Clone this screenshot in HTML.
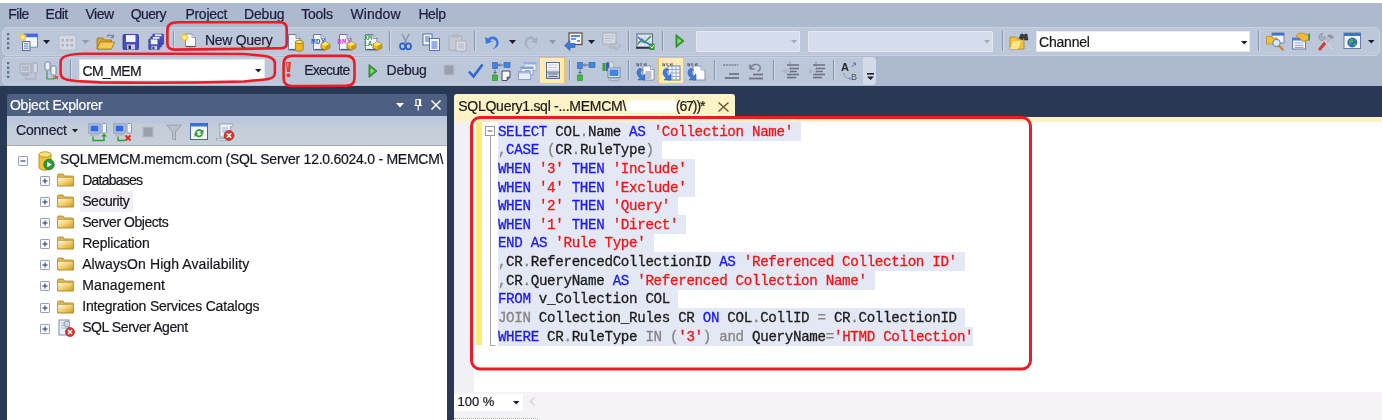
<!DOCTYPE html>
<html><head><meta charset="utf-8"><title>SSMS</title>
<style>
*{box-sizing:border-box;margin:0;padding:0}
html,body{width:1382px;height:420px;overflow:hidden;background:#fff}
body{position:relative;font-family:"Liberation Sans",sans-serif;font-size:14px;line-height:16px;color:#1e1e32}
.a{position:absolute}
.t{position:absolute;white-space:pre;line-height:16px;height:16px;-webkit-text-stroke:0.2px}
.c{position:absolute;white-space:pre;font-family:"Liberation Mono",monospace;font-size:14.2px;letter-spacing:-0.32px;line-height:18.64px;height:18.64px;color:#1c1c1c;-webkit-text-stroke:0.3px}
.k{color:#1a1af5}.r{color:#f21414}.g{color:#858585}
.sel{position:absolute;background:#e4e7f4;height:18.9px}
.sep{position:absolute;width:1px;background:#8592a8;box-shadow:1px 0 0 #d3dbe9}
svg{position:absolute;overflow:visible}
#w{position:absolute;left:0;top:0;width:1382px;height:420px;filter:blur(0.45px)}
</style></head><body>
<div id="w">
<div class="a" style="left:0px;top:3px;width:1382px;height:84px;background:#adb9ce;"></div>
<div class="a" style="left:0px;top:86px;width:1382px;height:334px;background:#293955;"></div>
<div class="a" style="left:2px;top:27px;width:1378px;height:28.5px;background:#bcc7d9;border-radius:5px;border:1px solid #c7d1e2"></div>
<div class="a" style="left:2px;top:56.5px;width:861px;height:28.5px;background:#bcc7d9;border-radius:5px 0 0 5px;border:1px solid #c7d1e2;border-right:none"></div>
<div class="a" style="left:863px;top:56.5px;width:13px;height:28.5px;background:#d3dbe9;border-radius:0 4px 4px 0"></div>
<span class="t" style="left:8.3px;top:5.9px;font-size:14px;letter-spacing:-0.520px;color:#1c1c38;">File</span>
<span class="t" style="left:45.6px;top:5.9px;font-size:14px;letter-spacing:-0.508px;color:#1c1c38;">Edit</span>
<span class="t" style="left:85.5px;top:5.9px;font-size:14px;letter-spacing:-0.464px;color:#1c1c38;">View</span>
<span class="t" style="left:130.8px;top:5.9px;font-size:14px;letter-spacing:-0.631px;color:#1c1c38;">Query</span>
<span class="t" style="left:185.4px;top:5.9px;font-size:14px;letter-spacing:-0.262px;color:#1c1c38;">Project</span>
<span class="t" style="left:244.0px;top:5.9px;font-size:14px;letter-spacing:-0.164px;color:#1c1c38;">Debug</span>
<span class="t" style="left:301.3px;top:5.9px;font-size:14px;letter-spacing:-0.271px;color:#1c1c38;">Tools</span>
<span class="t" style="left:350.5px;top:5.9px;font-size:14px;letter-spacing:0.041px;color:#1c1c38;">Window</span>
<span class="t" style="left:418.4px;top:5.9px;font-size:14px;letter-spacing:-0.398px;color:#1c1c38;">Help</span>
<span class="t" style="left:205.0px;top:32.4px;font-size:14px;letter-spacing:-0.290px;color:#1c1c38;">New Query</span>
<div class="a" style="left:79px;top:59px;width:185.5px;height:21.5px;background:#fff;border:1px solid #e4e9f2"></div>
<span class="t" style="left:82.5px;top:62.7px;font-size:14px;letter-spacing:-0.605px;color:#15151f;">CM_MEM</span>
<span class="t" style="left:304.2px;top:62.4px;font-size:14px;letter-spacing:-0.765px;color:#1c1c38;">Execute</span>
<span class="t" style="left:386.6px;top:62.4px;font-size:14px;letter-spacing:-0.239px;color:#1c1c38;">Debug</span>
<div class="a" style="left:696px;top:30.5px;width:104px;height:21.5px;background:#d5dcec;border:1px solid #e2e7f1;border-radius:1px"></div>
<div class="a" style="left:808px;top:30.5px;width:185px;height:21.5px;background:#d5dcec;border:1px solid #e2e7f1;border-radius:1px"></div>
<div class="a" style="left:1036px;top:31px;width:214px;height:21px;background:#fff;border:1px solid #e4e9f2"></div>
<span class="t" style="left:1039.0px;top:33.9px;font-size:14px;letter-spacing:-0.209px;color:#15151f;">Channel</span>
<div class="a" style="left:7px;top:116px;width:440px;height:304px;background:#fff;"></div>
<div class="a" style="left:7px;top:94px;width:440px;height:22px;background:#4d6082;border-radius:3px 3px 0 0"></div>
<span class="t" style="left:10.0px;top:96.7px;font-size:14px;letter-spacing:-0.270px;color:#fff;">Object Explorer</span>
<div class="a" style="left:7px;top:116px;width:440px;height:30px;background:linear-gradient(#bcc6dc 0,#bcc6dc 22%,#c2cdd9 30%,#c6d1da 100%);border-bottom:1px solid #a0abb7"></div>
<span class="t" style="left:16.0px;top:122.3px;font-size:14px;letter-spacing:-0.191px;color:#1c1c38;">Connect</span>
<div class="a" style="left:80px;top:191px;width:52.5px;height:20.5px;background:#f1eff3;"></div>
<span class="t" style="left:60.0px;top:150.7px;font-size:14px;letter-spacing:-0.255px;color:#15151f;">SQLMEMCM.memcm.com (SQL Server 12.0.6024.0 - MEMCM\</span>
<span class="t" style="left:82.2px;top:171.5px;font-size:14px;letter-spacing:-0.767px;color:#15151f;">Databases</span>
<span class="t" style="left:82.2px;top:192.6px;font-size:14px;letter-spacing:-0.439px;color:#15151f;">Security</span>
<span class="t" style="left:82.2px;top:213.7px;font-size:14px;letter-spacing:-0.468px;color:#15151f;">Server Objects</span>
<span class="t" style="left:82.2px;top:234.8px;font-size:14px;letter-spacing:-0.176px;color:#15151f;">Replication</span>
<span class="t" style="left:82.2px;top:255.8px;font-size:14px;letter-spacing:0.092px;color:#15151f;">AlwaysOn High Availability</span>
<span class="t" style="left:82.2px;top:276.9px;font-size:14px;letter-spacing:0.120px;color:#15151f;">Management</span>
<span class="t" style="left:82.2px;top:298.0px;font-size:14px;letter-spacing:-0.196px;color:#15151f;">Integration Services Catalogs</span>
<span class="t" style="left:82.2px;top:319.0px;font-size:14px;letter-spacing:-0.428px;color:#15151f;">SQL Server Agent</span>
<div class="a" style="left:454px;top:94px;width:281px;height:23px;background:#fdf3c6;border-radius:3px 3px 0 0"></div>
<div class="a" style="left:454px;top:117px;width:928px;height:5px;background:#fdf1c9;"></div>
<div class="a" style="left:454px;top:122px;width:928px;height:298px;background:#fff;"></div>
<div class="a" style="left:454px;top:122px;width:20px;height:270px;background:#f1f0f5;"></div>
<div class="a" style="left:454px;top:392px;width:928px;height:28px;background:#f4f2f6;"></div>
<div class="a" style="left:454px;top:393.5px;width:69px;height:17px;background:#fff;"></div>
<div class="a" style="left:454px;top:417.5px;width:84px;height:3px;background:#fff;border-top:1px dotted #aaa;border-right:1px solid #ccc"></div>
<span class="t" style="left:457.6px;top:394.1px;font-size:13px;letter-spacing:-0.040px;color:#15151f;">100 %</span>
<span class="t" style="left:458.3px;top:97.6px;font-size:14px;letter-spacing:-0.272px;color:#1a1a1a;">SQLQuery1.sql -...MEMCM\</span>
<span class="t" style="left:675.8px;top:97.6px;font-size:14px;letter-spacing:-1.062px;color:#1a1a1a;">(67))*</span>
<div class="a" style="left:627px;top:99.5px;width:49px;height:12.5px;background:#fff;border-radius:3px;filter:blur(1px)"></div>
<div class="sel" style="left:497.9px;top:121.80px;width:303.4px"></div>
<div class="sel" style="left:497.9px;top:140.44px;width:164.0px"></div>
<div class="sel" style="left:497.9px;top:159.08px;width:196.8px"></div>
<div class="sel" style="left:497.9px;top:177.72px;width:196.8px"></div>
<div class="sel" style="left:497.9px;top:196.36px;width:180.4px"></div>
<div class="sel" style="left:497.9px;top:215.00px;width:188.6px"></div>
<div class="sel" style="left:497.9px;top:233.64px;width:155.8px"></div>
<div class="sel" style="left:497.9px;top:252.28px;width:467.4px"></div>
<div class="sel" style="left:497.9px;top:270.92px;width:377.2px"></div>
<div class="sel" style="left:497.9px;top:289.56px;width:180.4px"></div>
<div class="sel" style="left:497.9px;top:308.20px;width:467.4px"></div>
<div class="sel" style="left:497.9px;top:326.84px;width:475.6px"></div>
<div class="c" style="left:497.9px;top:122.60px"><span class="k">SELECT</span> COL<span class="g">.</span>Name <span class="k">AS</span> <span class="r">&#x27;Collection Name&#x27;</span></div>
<div class="c" style="left:497.9px;top:141.24px"><span class="g">,</span><span class="k">CASE</span> <span class="g">(</span>CR<span class="g">.</span>RuleType<span class="g">)</span></div>
<div class="c" style="left:497.9px;top:159.88px"><span class="k">WHEN</span> <span class="r">&#x27;3&#x27;</span> <span class="k">THEN</span> <span class="r">&#x27;Include&#x27;</span></div>
<div class="c" style="left:497.9px;top:178.52px"><span class="k">WHEN</span> <span class="r">&#x27;4&#x27;</span> <span class="k">THEN</span> <span class="r">&#x27;Exclude&#x27;</span></div>
<div class="c" style="left:497.9px;top:197.16px"><span class="k">WHEN</span> <span class="r">&#x27;2&#x27;</span> <span class="k">THEN</span> <span class="r">&#x27;Query&#x27;</span></div>
<div class="c" style="left:497.9px;top:215.80px"><span class="k">WHEN</span> <span class="r">&#x27;1&#x27;</span> <span class="k">THEN</span> <span class="r">&#x27;Direct&#x27;</span></div>
<div class="c" style="left:497.9px;top:234.44px"><span class="k">END</span> <span class="k">AS</span> <span class="r">&#x27;Rule Type&#x27;</span></div>
<div class="c" style="left:497.9px;top:253.08px"><span class="g">,</span>CR<span class="g">.</span>ReferencedCollectionID <span class="k">AS</span> <span class="r">&#x27;Referenced Collection ID&#x27;</span></div>
<div class="c" style="left:497.9px;top:271.72px"><span class="g">,</span>CR<span class="g">.</span>QueryName <span class="k">AS</span> <span class="r">&#x27;Referenced Collection Name&#x27;</span></div>
<div class="c" style="left:497.9px;top:290.36px"><span class="k">FROM</span> v_Collection COL</div>
<div class="c" style="left:497.9px;top:309.00px"><span class="g">JOIN</span> Collection_Rules CR <span class="k">ON</span> COL<span class="g">.</span>CollID <span class="g">=</span> CR<span class="g">.</span>CollectionID</div>
<div class="c" style="left:497.9px;top:327.64px"><span class="k">WHERE</span> CR<span class="g">.</span>RuleType <span class="g">IN</span> <span class="g">(</span><span class="r">&#x27;3&#x27;</span><span class="g">)</span> <span class="g">and</span> QueryName<span class="g">=</span><span class="r">&#x27;HTMD Collection&#x27;</span></div>
<div class="a" style="left:476.4px;top:121.8px;width:6px;height:223.7px;background:#fbeb7c;"></div>
<svg style="left:484px;top:122px" width="14" height="226" viewBox="0 0 14 226"><rect x="1.5" y="4.5" width="9" height="9" fill="#fff" stroke="#9a9a9a"/><path d="M3.5 9H8.5" stroke="#555" stroke-width="1"/><path d="M6.5 14V223.5H11.5" fill="none" stroke="#a5a5a5"/></svg>
<svg width="0" height="0" style="left:0;top:0"><defs><linearGradient id="fg" x1="0" y1="0" x2="1" y2="1"><stop offset="0" stop-color="#fffbe6"/><stop offset=".5" stop-color="#f3d070"/><stop offset="1" stop-color="#d4981f"/></linearGradient></defs></svg>
<svg style="left:6.8px;top:33px" width="3" height="18" viewBox="0 0 3 18"><rect x="0" y="0.0" width="2.3" height="2.3" fill="#5f6f8c"/><rect x="0" y="4.6" width="2.3" height="2.3" fill="#5f6f8c"/><rect x="0" y="9.2" width="2.3" height="2.3" fill="#5f6f8c"/><rect x="0" y="13.8" width="2.3" height="2.3" fill="#5f6f8c"/></svg>
<svg style="left:6.8px;top:62px" width="3" height="18" viewBox="0 0 3 18"><rect x="0" y="0.0" width="2.3" height="2.3" fill="#5f6f8c"/><rect x="0" y="4.6" width="2.3" height="2.3" fill="#5f6f8c"/><rect x="0" y="9.2" width="2.3" height="2.3" fill="#5f6f8c"/><rect x="0" y="13.8" width="2.3" height="2.3" fill="#5f6f8c"/></svg>
<svg style="left:18.5px;top:32.5px" width="19" height="18" viewBox="0 0 19 18"><rect x="5" y="1" width="13.5" height="13" fill="#f4f6fb" stroke="#6d7ea5"/><rect x="5" y="1" width="13.5" height="3.2" fill="#3e6fd8"/><path d="M6 5v8.5h12" fill="none" stroke="#c9d3ec" stroke-width="1"/><rect x="3.5" y="8.5" width="7.5" height="9" fill="#eef2fb" stroke="#5c6e96"/><path d="M5 10.8h4.5M5 13h4.5M5 15.2h4.5" stroke="#3f6ad0" stroke-width=".9"/><path d="M4 -0.5l1 2.2 2.3-.7-.7 2.3 2.2 1-2.2 1 .7 2.3-2.3-.7-1 2.2-1-2.2-2.3.7.7-2.3-2.2-1 2.2-1-.7-2.3 2.3.7z" fill="#f6c93a"/><circle cx="4" cy="4.3" r="1.8" fill="#fff2a8"/></svg>
<svg style="left:43px;top:39.5px" width="7" height="4" viewBox="0 0 7 4"><path d="M0 0H7L3.5 4Z" fill="#1b1b2b"/></svg>
<svg style="left:57.5px;top:32.5px" width="19" height="18" viewBox="0 0 19 18"><rect x="1" y="2" width="17" height="15" fill="#d3d8e2" stroke="#b3bac8"/><rect x="3.5" y="6" width="2.5" height="2.5" fill="#aab1c0"/><rect x="3.5" y="11" width="2.5" height="2.5" fill="#aab1c0"/><rect x="8.0" y="6" width="2.5" height="2.5" fill="#aab1c0"/><rect x="8.0" y="11" width="2.5" height="2.5" fill="#aab1c0"/><rect x="12.5" y="6" width="2.5" height="2.5" fill="#aab1c0"/><rect x="12.5" y="11" width="2.5" height="2.5" fill="#aab1c0"/></svg>
<svg style="left:81.6px;top:39.5px" width="7" height="4" viewBox="0 0 7 4"><path d="M0 0H7L3.5 4Z" fill="#8f97a8"/></svg>
<svg style="left:95.5px;top:32.5px" width="19" height="18" viewBox="0 0 19 18"><path d="M1 5h6l1.5 2h7v9H1z" fill="#dba02a" stroke="#a87414" stroke-width=".8"/><path d="M1 16l3-7h14.5l-3 7z" fill="#f6cb55" stroke="#a87414" stroke-width=".8"/><path d="M11 3.5c2.5-2 5-1.5 6 .5M17.3 1.5v3h-3" fill="none" stroke="#6e7fa0" stroke-width="1.2"/></svg>
<svg style="left:122px;top:32.5px" width="18" height="18" viewBox="0 0 18 18"><g transform="translate(0 0) scale(1)"><rect x="1" y="1.5" width="15.5" height="15" rx="1" fill="#4a4fc0" stroke="#2f3490" stroke-width=".8"/><rect x="4" y="2" width="9.5" height="7" fill="#f1f3fb"/><rect x="5" y="11.5" width="8" height="5" fill="#c9cde6"/><rect x="6.5" y="12.5" width="2.5" height="3.5" fill="#2a2a55"/></g></svg>
<svg style="left:148px;top:32.5px" width="18" height="18" viewBox="0 0 18 18"><g transform="translate(4 0) scale(0.7)"><rect x="1" y="1.5" width="15.5" height="15" rx="1" fill="#4a4fc0" stroke="#2f3490" stroke-width=".8"/><rect x="4" y="2" width="9.5" height="7" fill="#f1f3fb"/><rect x="5" y="11.5" width="8" height="5" fill="#c9cde6"/><rect x="6.5" y="12.5" width="2.5" height="3.5" fill="#2a2a55"/></g><g transform="translate(2 2.5) scale(0.7)"><rect x="1" y="1.5" width="15.5" height="15" rx="1" fill="#4a4fc0" stroke="#2f3490" stroke-width=".8"/><rect x="4" y="2" width="9.5" height="7" fill="#f1f3fb"/><rect x="5" y="11.5" width="8" height="5" fill="#c9cde6"/><rect x="6.5" y="12.5" width="2.5" height="3.5" fill="#2a2a55"/></g><g transform="translate(0 5) scale(0.7)"><rect x="1" y="1.5" width="15.5" height="15" rx="1" fill="#4a4fc0" stroke="#2f3490" stroke-width=".8"/><rect x="4" y="2" width="9.5" height="7" fill="#f1f3fb"/><rect x="5" y="11.5" width="8" height="5" fill="#c9cde6"/><rect x="6.5" y="12.5" width="2.5" height="3.5" fill="#2a2a55"/></g></svg>
<div class="sep" style="left:173px;top:31px;height:20px"></div>
<svg style="left:180px;top:32.5px" width="18" height="19" viewBox="0 0 18 19"><path d="M5.5 1h6.5l3.5 3.5v9h-10z" fill="#fbfcff" stroke="#7c869e" stroke-width=".9"/><path d="M12 1v3.5h3.5" fill="#dfe4ef" stroke="#7c869e" stroke-width=".7"/><path d="M6 13.5h9.5" stroke="#4a5570" stroke-width="1.2"/><path d="M4.5 -0.3l1 2.2 2.3-.8-.8 2.3 2.2 1-2.2 1 .8 2.3-2.3-.8-1 2.2-1-2.2-2.3.8.8-2.3-2.2-1 2.2-1-.8-2.3 2.3.8z" fill="#f5c62e"/><circle cx="4.5" cy="4.4" r="2" fill="#fff0a0"/><path d="M1 16h17" stroke="#caa040" stroke-width="1" stroke-dasharray="1.5 1"/><path d="M10 14v2" stroke="#caa040" stroke-width="1"/></svg>
<svg style="left:286.5px;top:33.0px" width="18" height="18" viewBox="0 0 18 18"><path d="M1.5 1.5h7.5l4 4v11.5h-11.5z" fill="#f3f5fc" stroke="#6f7c99" stroke-width="1"/><path d="M9 1.5v4h4" fill="#d5dbea" stroke="#6f7c99" stroke-width=".8"/><path d="M2.5 16.5h10.5" stroke="#4f5d7c" stroke-width="1.2"/><path d="M8.5 9v7.5a3.8 1.71 0 0 0 7.6 0v-7.5z" fill="#f0b81c" stroke="#9a7410" stroke-width=".8"/><ellipse cx="12.3" cy="9" rx="3.8" ry="1.71" fill="#fbe27a" stroke="#9a7410" stroke-width=".8"/></svg>
<svg style="left:311.5px;top:33.0px" width="18" height="18" viewBox="0 0 18 18"><path d="M1.5 1.5h7.5l4 4v11.5h-11.5z" fill="#f3f5fc" stroke="#6f7c99" stroke-width="1"/><path d="M9 1.5v4h4" fill="#d5dbea" stroke="#6f7c99" stroke-width=".8"/><path d="M2.5 16.5h10.5" stroke="#4f5d7c" stroke-width="1.2"/><text x="-0.8" y="11" font-family="Liberation Mono,monospace" font-size="7.6" font-weight="bold" letter-spacing="0.3" fill="#2d63c8">MDX</text><path d="M13.4 8.82L17.8 10.91V15.09L13.4 17.18L9.0 15.09V10.91Z" fill="#f2c21a" stroke="#8a6a10" stroke-width=".8"/><path d="M13.4 8.82L17.8 10.91L13.4 13L9.0 10.91Z" fill="#ffe66a"/><path d="M13.4 13V17.18L17.8 15.09V10.91Z" fill="#c99512"/></svg>
<svg style="left:337.5px;top:33.0px" width="18" height="18" viewBox="0 0 18 18"><path d="M1.5 1.5h7.5l4 4v11.5h-11.5z" fill="#f3f5fc" stroke="#6f7c99" stroke-width="1"/><path d="M9 1.5v4h4" fill="#d5dbea" stroke="#6f7c99" stroke-width=".8"/><path d="M2.5 16.5h10.5" stroke="#4f5d7c" stroke-width="1.2"/><text x="-0.8" y="11" font-family="Liberation Mono,monospace" font-size="7.6" font-weight="bold" letter-spacing="0.3" fill="#d04ad0">DMX</text><path d="M13.4 8.82L17.8 10.91V15.09L13.4 17.18L9.0 15.09V10.91Z" fill="#f2c21a" stroke="#8a6a10" stroke-width=".8"/><path d="M13.4 8.82L17.8 10.91L13.4 13L9.0 10.91Z" fill="#ffe66a"/><path d="M13.4 13V17.18L17.8 15.09V10.91Z" fill="#c99512"/></svg>
<svg style="left:363.5px;top:33.0px" width="18" height="18" viewBox="0 0 18 18"><path d="M1.5 1.5h7.5l4 4v11.5h-11.5z" fill="#f3f5fc" stroke="#6f7c99" stroke-width="1"/><path d="M9 1.5v4h4" fill="#d5dbea" stroke="#6f7c99" stroke-width=".8"/><path d="M2.5 16.5h10.5" stroke="#4f5d7c" stroke-width="1.2"/><text x="0" y="6.5" font-family="Liberation Mono,monospace" font-size="6.8" font-weight="bold" fill="#3aa04a">XM</text><text x="0" y="13" font-family="Liberation Mono,monospace" font-size="6.8" font-weight="bold" fill="#3aa04a">LA</text><path d="M13.4 8.82L17.8 10.91V15.09L13.4 17.18L9.0 15.09V10.91Z" fill="#f2c21a" stroke="#8a6a10" stroke-width=".8"/><path d="M13.4 8.82L17.8 10.91L13.4 13L9.0 10.91Z" fill="#ffe66a"/><path d="M13.4 13V17.18L17.8 15.09V10.91Z" fill="#c99512"/></svg>
<div class="sep" style="left:388.5px;top:31px;height:20px"></div>
<svg style="left:399px;top:32.5px" width="13" height="18" viewBox="0 0 13 18"><path d="M3 1l4.5 9M10 1l-4.5 9" stroke="#8c96ad" stroke-width="1.6" fill="none"/><ellipse cx="3.6" cy="13.3" rx="2.6" ry="3" fill="none" stroke="#2d62c4" stroke-width="1.8"/><ellipse cx="9.4" cy="13.3" rx="2.6" ry="3" fill="none" stroke="#2d62c4" stroke-width="1.8"/></svg>
<svg style="left:422px;top:32.5px" width="18" height="18" viewBox="0 0 18 18"><rect x="1" y="1" width="9" height="11" fill="#f4f7fd" stroke="#4b6aa8" stroke-width=".9"/><path d="M3 4h5M3 6h5M3 8h5" stroke="#3568c9" stroke-width="1"/><rect x="7.5" y="5.5" width="10" height="12" fill="#f4f7fd" stroke="#4b6aa8" stroke-width=".9"/><path d="M9.5 9h6M9.5 11h6M9.5 13h6M9.5 15h6" stroke="#3568c9" stroke-width="1"/></svg>
<svg style="left:448px;top:32.5px" width="19" height="18" viewBox="0 0 19 18"><rect x="1" y="3" width="13" height="14" rx="1" fill="#c5cad4" stroke="#a9afbc"/><rect x="4.5" y="1" width="6" height="4" fill="#b4bac6"/><rect x="8" y="8" width="10" height="10" fill="#d8dce4" stroke="#a9afbc"/><path d="M10 11h6M10 13h6M10 15h6" stroke="#b0b6c2" stroke-width="1"/></svg>
<div class="sep" style="left:474px;top:31px;height:20px"></div>
<svg style="left:483.5px;top:33.5px" width="16" height="17" viewBox="0 0 16 17"><path d="M1 3l1 7 6.5-2.5-2.6-1.2c3-2.6 7.2-.2 6.2 4.2-.5 2.2-2 3.8-4 4.8 4.5-.6 7-4.2 6.4-7.8C13.6 2.5 8 .6 4 4.5z" fill="#3b78d8"/></svg>
<svg style="left:508.5px;top:39.5px" width="7" height="4" viewBox="0 0 7 4"><path d="M0 0H7L3.5 4Z" fill="#1b1b2b"/></svg>
<svg style="left:524px;top:33.5px" width="16" height="17" viewBox="0 0 16 17"><g transform="translate(15 0) scale(-1 1)"><path d="M1 3l1 7 6.5-2.5-2.6-1.2c3-2.6 7.2-.2 6.2 4.2-.5 2.2-2 3.8-4 4.8 4.5-.6 7-4.2 6.4-7.8C13.6 2.5 8 .6 4 4.5z" fill="#a9b0bf"/></g></svg>
<svg style="left:549px;top:39.5px" width="7" height="4" viewBox="0 0 7 4"><path d="M0 0H7L3.5 4Z" fill="#8f97a8"/></svg>
<svg style="left:564px;top:31.5px" width="19" height="19" viewBox="0 0 19 19"><rect x="5" y="1" width="13" height="11.5" fill="#f6f8fd" stroke="#5b4a3c" stroke-width="1.2"/><path d="M7 4h9" stroke="#3b64d2" stroke-width="1.6"/><path d="M7 7h5M13 9h3" stroke="#4a74e0" stroke-width="1.4"/><path d="M11 11.5H6v-3l-5.5 5 5.5 5v-3h5z" fill="#3f7ad8" stroke="#2a57a8" stroke-width=".6"/></svg>
<svg style="left:588px;top:39.5px" width="7" height="4" viewBox="0 0 7 4"><path d="M0 0H7L3.5 4Z" fill="#1b1b2b"/></svg>
<svg style="left:601.5px;top:32.0px" width="19" height="19" viewBox="0 0 19 19"><rect x="1" y="1" width="13" height="11" fill="#d7dbe4" stroke="#a8aebb"/><path d="M3 4h9M3 6.5h9M3 9h6" stroke="#b5bbc8" stroke-width="1.2"/><path d="M8 12h6v-3l5 5-5 5v-3H8z" fill="#bcc2ce" stroke="#a3a9b7" stroke-width=".6"/></svg>
<div class="sep" style="left:628px;top:31px;height:20px"></div>
<svg style="left:635.5px;top:32.5px" width="19" height="18" viewBox="0 0 19 18"><rect x="1" y="1" width="15.5" height="13" fill="#e8eef9" stroke="#55607a"/><path d="M1 5h15.5M1 9h15.5M5 1v13M9 1v13M13 1v13" stroke="#aeb9d3" stroke-width=".6"/><path d="M2 11l4-5 3 3 6-6" fill="none" stroke="#3a9b3a" stroke-width="1.5"/><path d="M2 4l5 5 4 1 5 3" fill="none" stroke="#3a74d0" stroke-width="1.5"/><rect x="0" y="14" width="17" height="1.8" fill="#2c3550"/><rect x="13.5" y="10.5" width="5" height="6.5" fill="#2f9a33"/><path d="M14.5 13.5l1.3 1.6 2-3" stroke="#fff" fill="none" stroke-width="1"/></svg>
<div class="sep" style="left:662px;top:31px;height:20px"></div>
<svg style="left:674.5px;top:34px" width="10" height="14" viewBox="0 0 10 14"><path d="M1 0.5L9 7 1 13.5z" fill="#37a52f" stroke="#1f7d1f" stroke-width=".8"/><path d="M2.5 4l4 3-4 3z" fill="#8fda7f"/></svg>
<svg style="left:790.5px;top:40px" width="6" height="3.5" viewBox="0 0 6 3.5"><path d="M0 0H6L3.0 3.5Z" fill="#a3abbb"/></svg>
<svg style="left:984px;top:40px" width="6" height="3.5" viewBox="0 0 6 3.5"><path d="M0 0H6L3.0 3.5Z" fill="#a3abbb"/></svg>
<div class="sep" style="left:1001.5px;top:31px;height:20px"></div>
<svg style="left:1009px;top:32.5px" width="19" height="18" viewBox="0 0 19 18"><path d="M1 4h6l1.5 2h6.5v10H1z" fill="#f0c23c" stroke="#b5851a" stroke-width=".8"/><path d="M1 16l3-8h8l-3 8z" fill="#fde68a"/><path d="M10 5l2-4h2l1 2 1-2h2l1 6h-3.5l-.5-2-1 0-.5 2z" fill="#3a3a44" stroke="#222" stroke-width=".5"/></svg>
<svg style="left:1240.5px;top:41px" width="6.5" height="3.5" viewBox="0 0 6.5 3.5"><path d="M0 0H6.5L3.25 3.5Z" fill="#1b1b2b"/></svg>
<div class="sep" style="left:1258px;top:31px;height:20px"></div>
<svg style="left:1266px;top:32.0px" width="19" height="19" viewBox="0 0 19 19"><rect x="6" y="1" width="12" height="10" fill="#f2f5fc" stroke="#7084b5"/><rect x="6" y="1" width="12" height="2.6" fill="#3c6fe0"/><path d="M0.5 4.5h5l1 1.5h4.5v6H.5z" fill="#f0c23c" stroke="#b5851a" stroke-width=".7"/><circle cx="10.5" cy="11" r="3.6" fill="#d8ecfb" stroke="#6e8cc0" stroke-width="1.2"/><path d="M13 13.8l3.8 3.8" stroke="#c98a2b" stroke-width="2.2" stroke-linecap="round"/></svg>
<svg style="left:1291px;top:32.0px" width="19" height="19" viewBox="0 0 19 19"><rect x="1.5" y="6" width="13" height="11" fill="#f5f7fc" stroke="#6b7ca6"/><rect x="1.5" y="6" width="13" height="2.5" fill="#4b7de0"/><path d="M3.5 11h9M3.5 13.5h9M3.5 15.5h9" stroke="#8ea3d6" stroke-width="1"/><path d="M5 4c2-3 6-4 9-2l4 1v5l-3 .5c-2 1.5-4 1-5-1z" fill="#f0b93a" stroke="#b07d18" stroke-width=".7"/><rect x="17.3" y="1.5" width="1.7" height="7" fill="#2e9b46"/></svg>
<svg style="left:1317px;top:32.0px" width="19" height="19" viewBox="0 0 19 19"><path d="M3 17l10-12" stroke="#d23a34" stroke-width="3" stroke-linecap="round"/><path d="M10.5 8L15 2.5" stroke="#b8bfcd" stroke-width="3" stroke-linecap="round"/><path d="M15 17L5 5" stroke="#c8cedb" stroke-width="2.6" stroke-linecap="round"/><path d="M2 4.5c0-2 2-3.5 4-3L4.5 3.5l1.5 2 2-1c.5 2-1 4-3 4S2 6.5 2 4.5z" fill="#aab3c6" stroke="#7c869c" stroke-width=".6"/><path d="M12 2l5 3-1.5 2-5-3z" fill="#8a93a8"/></svg>
<svg style="left:1343px;top:32.0px" width="19" height="18" viewBox="0 0 19 18"><rect x="1" y="1" width="16.5" height="15.5" fill="#f4f6fc" stroke="#6b7ca6"/><rect x="1" y="1" width="16.5" height="3" fill="#3c6fe0"/><circle cx="9.3" cy="10.5" r="4.6" fill="#2f6fd0" stroke="#1d4a94" stroke-width=".6"/><path d="M6 9c1-2 3-2.5 4-1.5 1 1 .5 2.5-1 3s-1 2.5-2 2C5.5 12 5.5 10 6 9z" fill="#43b04a"/><path d="M11 11.5c1-.5 2 0 2 1s-1 2-2 1.5z" fill="#43b04a"/></svg>
<svg style="left:1368px;top:40px" width="6.5" height="3.5" viewBox="0 0 6.5 3.5"><path d="M0 0H6.5L3.25 3.5Z" fill="#1b1b2b"/></svg>
<svg style="left:18.5px;top:62.0px" width="19" height="18" viewBox="0 0 19 18"><rect x="1" y="2" width="11" height="9" fill="#c9ced8" stroke="#a2a9b8"/><rect x="3" y="4" width="7" height="5" fill="#b4bac7"/><rect x="3" y="12" width="7" height="1.5" fill="#a2a9b8"/><rect x="14" y="1" width="4.5" height="10" rx="1" fill="#d2d6df" stroke="#a2a9b8"/><path d="M6.5 14v3h10v-5" fill="none" stroke="#a9afbc" stroke-width="1.2"/></svg>
<svg style="left:43.5px;top:61.5px" width="15" height="18" viewBox="0 0 15 18"><rect x="1" y="0" width="5" height="8" rx="1" fill="#eef1f8" stroke="#7c88a3"/><rect x="7" y="4" width="5" height="9" rx="1" fill="#eef1f8" stroke="#7c88a3"/><path d="M3 9v8h7v-3" fill="none" stroke="#3aa03a" stroke-width="1.2"/><path d="M11 14l3 3M14 14l-3 3" stroke="#e0431f" stroke-width="1.2"/></svg>
<div class="sep" style="left:70px;top:60px;height:20px"></div>
<svg style="left:254.8px;top:69px" width="6.5" height="3.5" viewBox="0 0 6.5 3.5"><path d="M0 0H6.5L3.25 3.5Z" fill="#1b1b2b"/></svg>
<svg style="left:285.3px;top:62px" width="7" height="16" viewBox="0 0 7 16"><path d="M1 0h5L5 10H2z" fill="#e23a2e"/><circle cx="3.5" cy="13.3" r="2" fill="#e23a2e"/><path d="M2 1h1.5l-.3 7z" fill="#f7a08f"/></svg>
<svg style="left:368px;top:63.5px" width="10" height="14" viewBox="0 0 10 14"><path d="M1 0.5L9 7 1 13.5z" fill="#37a52f" stroke="#1f7d1f" stroke-width=".8"/><path d="M2.5 4l4 3-4 3z" fill="#8fda7f"/></svg>
<svg style="left:443.5px;top:64.5px" width="10" height="10" viewBox="0 0 10 10"><rect x="0" y="0" width="10" height="10" fill="#9aa0ad" stroke="#b9bec9" stroke-width="1"/></svg>
<svg style="left:467.5px;top:63px" width="16" height="15" viewBox="0 0 16 15"><path d="M1 8.5l4.5 5L14.5 1.5" fill="none" stroke="#2f68d8" stroke-width="2.6" stroke-linejoin="miter"/></svg>
<svg style="left:491.5px;top:61.5px" width="19" height="19" viewBox="0 0 19 19"><rect x="0.5" y="0.5" width="5" height="6" fill="#3f84e6" stroke="#2b5fb0" stroke-width=".6"/><rect x="12" y="0.5" width="6" height="5" fill="#3f84e6" stroke="#2b5fb0" stroke-width=".6"/><path d="M6.5 3h5M8 1.5L6.5 3 8 4.5M3 7.5v5M1.5 10.5h3" stroke="#5d6980" stroke-width="1" fill="none"/><rect x="0.5" y="13" width="5" height="5.5" fill="#3dbb3d" stroke="#238a23" stroke-width=".6"/><path d="M10 9h8v6l-3 3.5h-5z" fill="#f3f5fa" stroke="#454c5e" stroke-width="1"/><path d="M18 15h-3v3.5" fill="#5a6174" stroke="#454c5e" stroke-width=".6"/></svg>
<svg style="left:517.5px;top:61.5px" width="19" height="19" viewBox="0 0 19 19"><rect x="6" y="0.5" width="12" height="8" fill="#eef2fb" stroke="#9fb0d6"/><rect x="6" y="0.5" width="12" height="2" fill="#8fb0ea"/><rect x="3" y="5" width="12" height="8" fill="#eef2fb" stroke="#8ea0c8"/><rect x="3" y="5" width="12" height="2" fill="#7ea4e6"/><rect x="7" y="8.5" width="5" height="3" fill="#5a6580"/><rect x="0.5" y="9.5" width="12" height="8" fill="#e9eefa" stroke="#8ea0c8"/><rect x="0.5" y="9.5" width="12" height="2" fill="#9db9ec"/></svg>
<div class="a" style="left:539px;top:57px;width:26px;height:26.5px;background:#fdedb4;border:1px solid #efc55a"></div>
<svg style="left:546px;top:62px" width="14" height="17" viewBox="0 0 14 17"><rect x="0.5" y="0.5" width="13" height="16" fill="#f7f8fc" stroke="#5d6b8c"/><path d="M2 3h10M2 5.5h10M2 8h10" stroke="#c5cbdb" stroke-width="1"/><rect x="0.5" y="10" width="13" height="6.5" fill="#c9d2e6" stroke="#5d6b8c"/><path d="M2.5 12h9M2.5 14.5h9" stroke="#5d6b8c" stroke-width="1.2"/></svg>
<div class="sep" style="left:568.5px;top:60px;height:20px"></div>
<svg style="left:577px;top:61.5px" width="19" height="19" viewBox="0 0 19 19"><rect x="0.5" y="0.5" width="5" height="6" fill="#3f84e6" stroke="#2b5fb0" stroke-width=".6"/><rect x="12" y="0.5" width="6" height="5" fill="#3f84e6" stroke="#2b5fb0" stroke-width=".6"/><path d="M6.5 3h5M8 1.5L6.5 3 8 4.5M3 7.5v5M1.5 10.5h3" stroke="#5d6980" stroke-width="1" fill="none"/><rect x="0.5" y="13" width="5" height="5.5" fill="#3dbb3d" stroke="#238a23" stroke-width=".6"/></svg>
<svg style="left:601.5px;top:61.5px" width="19" height="19" viewBox="0 0 19 19"><rect x="0.5" y="1" width="3" height="8" fill="#3aa23a"/><rect x="4" y="0.5" width="3" height="8.5" fill="#3d55a8"/><rect x="7.5" y="0" width="4" height="9" fill="#d9dde8" stroke="#9aa3ba" stroke-width=".6"/><rect x="6" y="6" width="12" height="9.5" fill="#e6ebf7" stroke="#7a88ab"/><rect x="7.5" y="7.5" width="9" height="6.5" fill="#3e86ea"/><rect x="7" y="16" width="10" height="2.5" fill="#c2c9da" stroke="#8b96b2" stroke-width=".6"/></svg>
<div class="sep" style="left:628px;top:60px;height:20px"></div>
<svg style="left:635.5px;top:61.5px" width="19" height="19" viewBox="0 0 19 19"><path d="M1 1v3M3 1.5l-1 3M5 1v3M8 1.5l1 3M10 1v3" stroke="#3a3f50" stroke-width=".9"/><path d="M7 4h7.5l3.5 3.5v10.5h-11z" fill="#fdfdff" stroke="#8a93a8" stroke-width="1"/><path d="M14.5 4v3.5h3.5" fill="#dfe4ef" stroke="#8a93a8" stroke-width=".8"/><path d="M9.5 10h6M9.5 12h6M9.5 14h6M9.5 16h6" stroke="#6b7590" stroke-width=".9"/><path d="M4 6C0 8 0 13 4 16l-2 2h7v-6l-2.5 2C4 12 4 9 6.5 8z" fill="#3f7ad8" stroke="#2a57a8" stroke-width=".5"/></svg>
<div class="a" style="left:658px;top:57px;width:26px;height:26.5px;background:#fdedb4;border:1px solid #efc55a"></div>
<svg style="left:661.5px;top:61.5px" width="19" height="19" viewBox="0 0 19 19"><path d="M1 1v3M3 1.5l-1 3M5 1v3M8 1.5l1 3M10 1v3" stroke="#3a3f50" stroke-width=".9"/><rect x="6" y="4" width="12" height="14" fill="#f4f7fd" stroke="#6c7da6"/><path d="M6 7.5h12M6 11h12M6 14.5h12M10 4v14M14 4v14" stroke="#8ea3d2" stroke-width=".9"/><path d="M4 6C0 8 0 13 4 16l-2 2h7v-6l-2.5 2C4 12 4 9 6.5 8z" fill="#3f7ad8" stroke="#2a57a8" stroke-width=".5"/></svg>
<svg style="left:687px;top:61.5px" width="19" height="19" viewBox="0 0 19 19"><path d="M1 1v3M3 1.5l-1 3M5 1v3M8 1.5l1 3M10 1v3" stroke="#3a3f50" stroke-width=".9"/><path d="M6 4h8l4 4v10h-12z" fill="#fdfdff" stroke="#8a93a8" stroke-width="1"/><path d="M14 4v4h4" fill="#dfe4ef" stroke="#8a93a8" stroke-width=".8"/><path d="M4 6C0 8 0 13 4 16l-2 2h7v-6l-2.5 2C4 12 4 9 6.5 8z" fill="#3f7ad8" stroke="#2a57a8" stroke-width=".5"/></svg>
<div class="sep" style="left:713.5px;top:60px;height:20px"></div>
<svg style="left:721.5px;top:63px" width="18" height="17" viewBox="0 0 18 17"><path d="M1 2h15" stroke="#7a8296" stroke-width="1.6" stroke-dasharray="2 .8"/><path d="M5 6h11" stroke="#c3c9d6" stroke-width="1.2"/><path d="M7 11h10" stroke="#6e7589" stroke-width="1.8"/><path d="M3 15h14" stroke="#6e7589" stroke-width="1.8"/></svg>
<svg style="left:748px;top:63px" width="17" height="17" viewBox="0 0 17 17"><path d="M2 6V1.5M2 6h4.5" stroke="#6e7589" stroke-width="1.4" fill="none"/><path d="M2.5 5.5C4 1 10 0 12 3.5c1 2-.5 4-2.5 5" fill="none" stroke="#7a8296" stroke-width="1.3"/><path d="M5 11.5h10" stroke="#6e7589" stroke-width="1.8"/><path d="M1 15.5h14" stroke="#6e7589" stroke-width="1.8"/></svg>
<div class="sep" style="left:772.5px;top:60px;height:20px"></div>
<svg style="left:781px;top:62.0px" width="19" height="18" viewBox="0 0 19 18"><path d="M9 0v18" stroke="#7a8296" stroke-width="1" stroke-dasharray="1.5 1.5"/><path d="M6 3h12M9 6.5h9M9 9.5h7M6 12.5h12M6 15.5h9" stroke="#6a7185" stroke-width="1.6"/><path d="M6 6l-5 3 5 3z" fill="#b0b6c4"/><path d="M5 9h4" stroke="#b0b6c4" stroke-width="1.5"/></svg>
<svg style="left:807px;top:62.0px" width="19" height="18" viewBox="0 0 19 18"><path d="M9 0v18" stroke="#7a8296" stroke-width="1" stroke-dasharray="1.5 1.5"/><path d="M6 3h12M9 6.5h9M9 9.5h7M6 12.5h12M6 15.5h9" stroke="#6a7185" stroke-width="1.6"/><path d="M2 6l5 3-5 3z" fill="#b0b6c4"/></svg>
<div class="sep" style="left:832.5px;top:60px;height:20px"></div>
<svg style="left:841px;top:61.5px" width="19" height="19" viewBox="0 0 19 19"><text x="0" y="9" font-family="Liberation Sans,sans-serif" font-size="11" font-weight="bold" fill="#2a2528">A</text><text x="10" y="18" font-family="Liberation Sans,sans-serif" font-size="9" fill="#4a4f5e">B</text><path d="M3 11c0 3 2 5 5 5.5" fill="none" stroke="#5d6680" stroke-width="1" stroke-dasharray="1 1.2"/><path d="M8 16.5h1.5" stroke="#3f7ad8" stroke-width="1.5"/><path d="M11 5l3-3.5M12 1h2.5v2.5" fill="none" stroke="#3f7ad8" stroke-width="1"/></svg>
<svg style="left:867px;top:72.5px" width="7" height="7" viewBox="0 0 7 7"><rect x="0" y="0" width="7" height="1.6" fill="#1b1b2b"/><path d="M0 3.5h7L3.5 7z" fill="#1b1b2b"/></svg>
<svg style="left:396px;top:102.5px" width="8" height="4.5" viewBox="0 0 8 4.5"><path d="M0 0H8L4.0 4.5Z" fill="#fff"/></svg>
<svg style="left:414px;top:99px" width="8" height="12" viewBox="0 0 8 12"><path d="M2 0.5h4.5v6H2zM0.5 6.5h7.5M4.2 6.5v5" fill="none" stroke="#fff" stroke-width="1.2"/><path d="M5.5 1v5" stroke="#fff" stroke-width="1.2"/></svg>
<svg style="left:431px;top:100px" width="10" height="10" viewBox="0 0 10 10"><path d="M0.5 0.5l9 9M9.5 0.5l-9 9" stroke="#fff" stroke-width="1.5"/></svg>
<svg style="left:72.3px;top:128.5px" width="6" height="3.5" viewBox="0 0 6 3.5"><path d="M0 0H6L3.0 3.5Z" fill="#1b1b2b"/></svg>
<svg style="left:87.5px;top:122.5px" width="20" height="19" viewBox="0 0 20 19"><rect x="1" y="1" width="11" height="9" fill="#dfe6f5" stroke="#7d8bb0"/><rect x="2.5" y="2.5" width="8" height="6" fill="#2f6be8"/><rect x="2" y="11" width="9" height="1.8" fill="#aeb7cc"/><rect x="14" y="0.5" width="4.5" height="9.5" rx="1" fill="#eef1f8" stroke="#8a96b3"/><path d="M5 13.5v4h11v-5" fill="none" stroke="#2e9e2e" stroke-width="1.4"/><path d="M13 13.5l3-3 3 3z" fill="#2e9e2e"/></svg>
<svg style="left:113px;top:122.5px" width="20" height="19" viewBox="0 0 20 19"><rect x="1" y="1" width="11" height="9" fill="#dfe6f5" stroke="#7d8bb0"/><rect x="2.5" y="2.5" width="8" height="6" fill="#2f6be8"/><rect x="2" y="11" width="9" height="1.8" fill="#aeb7cc"/><rect x="14" y="0.5" width="4.5" height="9.5" rx="1" fill="#eef1f8" stroke="#8a96b3"/><path d="M5 13.5v4h7" fill="none" stroke="#2e9e2e" stroke-width="1.4"/><path d="M12.5 12.5l5 5M17.5 12.5l-5 5" stroke="#e8261c" stroke-width="1.8"/></svg>
<svg style="left:142.5px;top:127.3px" width="10" height="10" viewBox="0 0 10 10"><rect x="0" y="0" width="10" height="10" fill="#9aa0ad" stroke="#b9bec9" stroke-width="1"/></svg>
<svg style="left:166px;top:124px" width="16" height="17" viewBox="0 0 16 17"><path d="M0.5 1h15l-6 7v8l-3 -1v-7z" fill="#b9bfcb" stroke="#9299a8" stroke-width=".8"/></svg>
<svg style="left:190px;top:123px" width="18" height="17" viewBox="0 0 18 17"><rect x="0.5" y="0.5" width="17" height="16" fill="#f6f8fd" stroke="#4a63b0"/><rect x="0.5" y="0.5" width="17" height="3" fill="#3c6fe0"/><path d="M5 10a4 4 0 0 1 7-2.5l1.5-1v4h-4l1.5-1.5A2.5 2.5 0 0 0 6.5 10z" fill="#2e9e2e"/><path d="M13 10.5a4 4 0 0 1-7 2.5l-1.5 1v-4h4l-1.5 1.5a2.5 2.5 0 0 0 4.5-1z" fill="#2e9e2e"/></svg>
<svg style="left:216px;top:122.5px" width="19" height="18" viewBox="0 0 19 18"><path d="M3 1h13c1.5 0 1.5 2.5 0 2.5h-1.5V14H4V3.5C4 2 3 2 3 1z" fill="#eef1f8" stroke="#8a93a8" stroke-width=".8"/><path d="M6 5h6M6 7h6M6 9h4" stroke="#a4b4d8" stroke-width="1"/><path d="M0.5 15.5h11v1.8H.5z" fill="#dfe3ee" stroke="#8a93a8" stroke-width=".6"/><circle cx="13" cy="12.5" r="5" fill="#d8342c" stroke="#a5201b" stroke-width=".6"/><path d="M10.8 10.3l4.4 4.4M15.2 10.3l-4.4 4.4" stroke="#fff" stroke-width="1.6"/></svg>
<svg style="left:17.5px;top:156px" width="10" height="10" viewBox="0 0 10 10"><rect x="0.5" y="0.5" width="9" height="9" rx=".6" fill="#fafafc" stroke="#969eb0"/><path d="M2.5 5h5" stroke="#3a4a7a" stroke-width="1.2"/></svg>
<svg style="left:37.5px;top:150.5px" width="17" height="20" viewBox="0 0 17 20"><path d="M1 3.5v13a6 2.7 0 0 0 12 0v-13z" fill="#efc33a" stroke="#b08314" stroke-width=".8"/><ellipse cx="7" cy="3.5" rx="6" ry="2.7" fill="#fbe27a" stroke="#b08314" stroke-width=".8"/><circle cx="11" cy="13.5" r="5.2" fill="#2f9b35" stroke="#1f6f25" stroke-width=".8"/><path d="M9.3 10.7l4.4 2.8-4.4 2.8z" fill="#fff"/></svg>
<svg style="left:39.7px;top:176.1px" width="10" height="10" viewBox="0 0 10 10"><rect x="0.5" y="0.5" width="9" height="9" rx=".6" fill="#fafafc" stroke="#969eb0"/><path d="M2.5 5h5" stroke="#3a4a7a" stroke-width="1.2"/><path d="M5 2.5v5" stroke="#3a4a7a" stroke-width="1.2"/></svg>
<svg style="left:57.2px;top:173.1px" width="17" height="14" viewBox="0 0 17 14"><path d="M0.5 2.5c0-1 .5-1.5 1.5-1.5h4l1.5 2h8c.6 0 1 .4 1 1v9H.5z" fill="#dcb654" stroke="#a8842a" stroke-width=".8"/><rect x="0.8" y="4.5" width="15.4" height="8.3" fill="url(#fg)" stroke="#b39433" stroke-width=".6"/></svg>
<svg style="left:39.7px;top:197.2px" width="10" height="10" viewBox="0 0 10 10"><rect x="0.5" y="0.5" width="9" height="9" rx=".6" fill="#fafafc" stroke="#969eb0"/><path d="M2.5 5h5" stroke="#3a4a7a" stroke-width="1.2"/><path d="M5 2.5v5" stroke="#3a4a7a" stroke-width="1.2"/></svg>
<svg style="left:57.2px;top:194.2px" width="17" height="14" viewBox="0 0 17 14"><path d="M0.5 2.5c0-1 .5-1.5 1.5-1.5h4l1.5 2h8c.6 0 1 .4 1 1v9H.5z" fill="#dcb654" stroke="#a8842a" stroke-width=".8"/><rect x="0.8" y="4.5" width="15.4" height="8.3" fill="url(#fg)" stroke="#b39433" stroke-width=".6"/></svg>
<svg style="left:39.7px;top:218.2px" width="10" height="10" viewBox="0 0 10 10"><rect x="0.5" y="0.5" width="9" height="9" rx=".6" fill="#fafafc" stroke="#969eb0"/><path d="M2.5 5h5" stroke="#3a4a7a" stroke-width="1.2"/><path d="M5 2.5v5" stroke="#3a4a7a" stroke-width="1.2"/></svg>
<svg style="left:57.2px;top:215.2px" width="17" height="14" viewBox="0 0 17 14"><path d="M0.5 2.5c0-1 .5-1.5 1.5-1.5h4l1.5 2h8c.6 0 1 .4 1 1v9H.5z" fill="#dcb654" stroke="#a8842a" stroke-width=".8"/><rect x="0.8" y="4.5" width="15.4" height="8.3" fill="url(#fg)" stroke="#b39433" stroke-width=".6"/></svg>
<svg style="left:39.7px;top:239.3px" width="10" height="10" viewBox="0 0 10 10"><rect x="0.5" y="0.5" width="9" height="9" rx=".6" fill="#fafafc" stroke="#969eb0"/><path d="M2.5 5h5" stroke="#3a4a7a" stroke-width="1.2"/><path d="M5 2.5v5" stroke="#3a4a7a" stroke-width="1.2"/></svg>
<svg style="left:57.2px;top:236.3px" width="17" height="14" viewBox="0 0 17 14"><path d="M0.5 2.5c0-1 .5-1.5 1.5-1.5h4l1.5 2h8c.6 0 1 .4 1 1v9H.5z" fill="#dcb654" stroke="#a8842a" stroke-width=".8"/><rect x="0.8" y="4.5" width="15.4" height="8.3" fill="url(#fg)" stroke="#b39433" stroke-width=".6"/></svg>
<svg style="left:39.7px;top:260.4px" width="10" height="10" viewBox="0 0 10 10"><rect x="0.5" y="0.5" width="9" height="9" rx=".6" fill="#fafafc" stroke="#969eb0"/><path d="M2.5 5h5" stroke="#3a4a7a" stroke-width="1.2"/><path d="M5 2.5v5" stroke="#3a4a7a" stroke-width="1.2"/></svg>
<svg style="left:57.2px;top:257.4px" width="17" height="14" viewBox="0 0 17 14"><path d="M0.5 2.5c0-1 .5-1.5 1.5-1.5h4l1.5 2h8c.6 0 1 .4 1 1v9H.5z" fill="#dcb654" stroke="#a8842a" stroke-width=".8"/><rect x="0.8" y="4.5" width="15.4" height="8.3" fill="url(#fg)" stroke="#b39433" stroke-width=".6"/></svg>
<svg style="left:39.7px;top:281.4px" width="10" height="10" viewBox="0 0 10 10"><rect x="0.5" y="0.5" width="9" height="9" rx=".6" fill="#fafafc" stroke="#969eb0"/><path d="M2.5 5h5" stroke="#3a4a7a" stroke-width="1.2"/><path d="M5 2.5v5" stroke="#3a4a7a" stroke-width="1.2"/></svg>
<svg style="left:57.2px;top:278.4px" width="17" height="14" viewBox="0 0 17 14"><path d="M0.5 2.5c0-1 .5-1.5 1.5-1.5h4l1.5 2h8c.6 0 1 .4 1 1v9H.5z" fill="#dcb654" stroke="#a8842a" stroke-width=".8"/><rect x="0.8" y="4.5" width="15.4" height="8.3" fill="url(#fg)" stroke="#b39433" stroke-width=".6"/></svg>
<svg style="left:39.7px;top:302.5px" width="10" height="10" viewBox="0 0 10 10"><rect x="0.5" y="0.5" width="9" height="9" rx=".6" fill="#fafafc" stroke="#969eb0"/><path d="M2.5 5h5" stroke="#3a4a7a" stroke-width="1.2"/><path d="M5 2.5v5" stroke="#3a4a7a" stroke-width="1.2"/></svg>
<svg style="left:57.2px;top:299.5px" width="17" height="14" viewBox="0 0 17 14"><path d="M0.5 2.5c0-1 .5-1.5 1.5-1.5h4l1.5 2h8c.6 0 1 .4 1 1v9H.5z" fill="#dcb654" stroke="#a8842a" stroke-width=".8"/><rect x="0.8" y="4.5" width="15.4" height="8.3" fill="url(#fg)" stroke="#b39433" stroke-width=".6"/></svg>
<svg style="left:39.7px;top:323.6px" width="10" height="10" viewBox="0 0 10 10"><rect x="0.5" y="0.5" width="9" height="9" rx=".6" fill="#fafafc" stroke="#969eb0"/><path d="M2.5 5h5" stroke="#3a4a7a" stroke-width="1.2"/><path d="M5 2.5v5" stroke="#3a4a7a" stroke-width="1.2"/></svg>
<svg style="left:57.5px;top:318.8px" width="18" height="18" viewBox="0 0 18 18"><rect x="1" y="1" width="10" height="15" fill="#eef1f8" stroke="#7f8aa6"/><path d="M3 4h6M3 6.5h6M3 9h6" stroke="#9fb0d6" stroke-width="1"/><circle cx="9" cy="5" r="3" fill="#cfd5e3" stroke="#7f8aa6" stroke-width=".7"/><circle cx="12" cy="13" r="4.6" fill="#d8342c" stroke="#a5201b" stroke-width=".6"/><path d="M10 11l4 4M14 11l-4 4" stroke="#fff" stroke-width="1.5"/></svg>
<svg style="left:718px;top:102.3px" width="11" height="10" viewBox="0 0 11 10"><path d="M0.5 0.5l10 9M10.5 0.5l-10 9" stroke="#6b5a3a" stroke-width="1.6"/></svg>
<svg style="left:513px;top:401px" width="6.5" height="3.5" viewBox="0 0 6.5 3.5"><path d="M0 0H6.5L3.25 3.5Z" fill="#1b1b2b"/></svg>
<svg style="left:530px;top:397px" width="5" height="9" viewBox="0 0 5 9"><path d="M4.5 0.5L0.5 4.5l4 4" fill="none" stroke="#d5d3d9" stroke-width="1.2"/></svg>
<svg style="left:0;top:0" width="1382" height="420" viewBox="0 0 1382 420" fill="none" stroke="#ed1c24" stroke-linejoin="round"><rect x="471.5" y="117.5" width="559" height="251.5" rx="8.5" stroke-width="3"/><path d="M178 22.2 L280 22.2 C284.5 22.2 286.7 24.5 286.7 29 L286.7 43.5 C286.7 46.6 284.5 48.2 281 48.3 L175 49.6 C170 49.6 167.4 47.5 167.4 44 L167.4 29.5 C167.4 24.5 171 22.2 178 22.2Z" stroke-width="2.6"/><path d="M84 53.8 C120 53.6 200 53.8 244 54 L263 55.7 C271 56.5 274.9 58.8 274.9 63.5 L274.9 73 C274.9 77.3 272 79 265 79.5 L244 81.5 C200 82.6 130 82.8 100 82.4 L76 81 C65 80 60.6 78.5 60.6 73 L60.6 62 C60.6 57 68 54 84 53.8Z" stroke-width="2.6"/><path d="M292 55.9 L346 55.9 C352 55.9 354.5 58.5 354.5 64 L354.5 78 C354.5 83.5 352 85.8 346 85.8 L292 86 C286 86 283.6 83.5 283.6 78 L283.6 64 C283.6 58.5 286 55.9 292 55.9Z" stroke-width="2.6"/></svg>
</div>
</body></html>
